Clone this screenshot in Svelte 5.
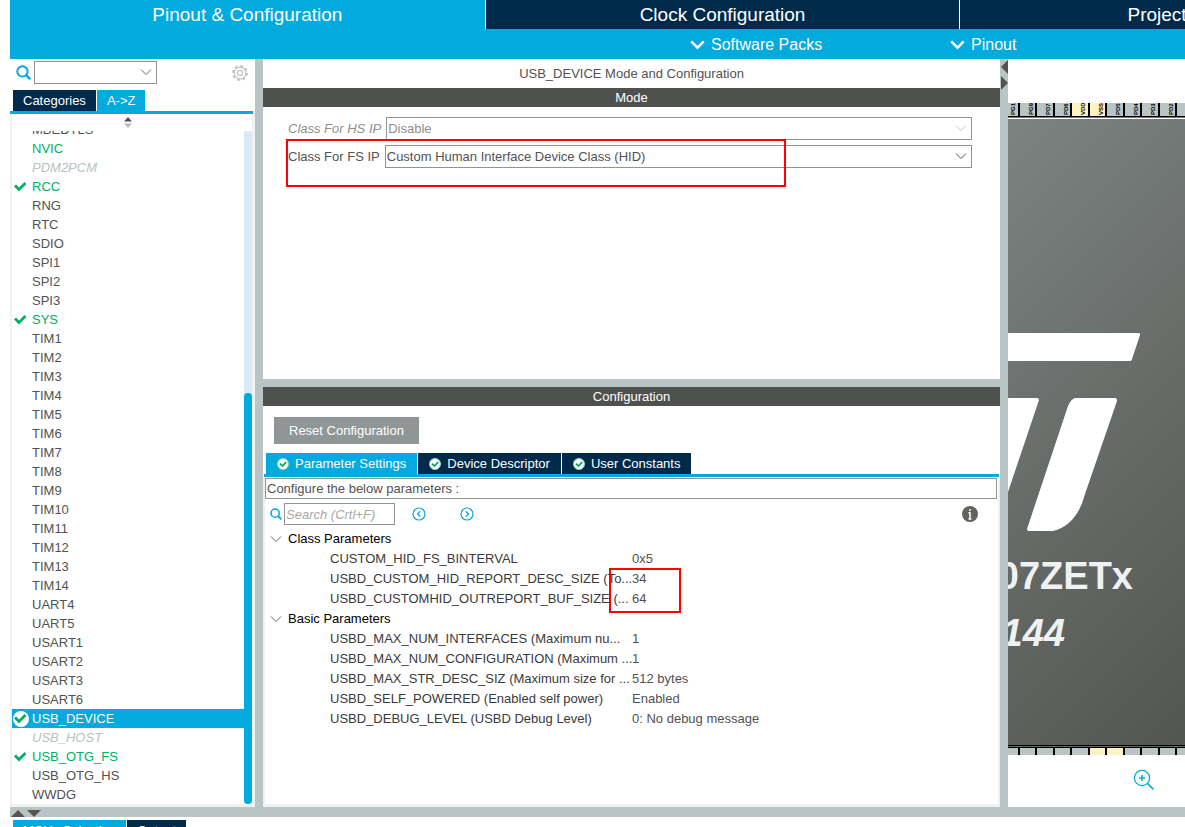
<script>
  /**
   * Pinout & Configuration screen: peripheral list, USB_DEVICE settings
   * and the chip view, with resizable-looking dividers between them.
   */

  const peripherals = [
    { name: 'MBEDTLS' },
    { name: 'NVIC', state: 'active' },
    { name: 'PDM2PCM', state: 'off' },
    { name: 'RCC', state: 'active', checked: true },
    { name: 'RNG' },
    { name: 'RTC' },
    { name: 'SDIO' },
    { name: 'SPI1' },
    { name: 'SPI2' },
    { name: 'SPI3' },
    { name: 'SYS', state: 'active', checked: true },
    ...Array.from({ length: 14 }, (_, i) => ({ name: `TIM${i + 1}` })),
    { name: 'UART4' },
    { name: 'UART5' },
    { name: 'USART1' },
    { name: 'USART2' },
    { name: 'USART3' },
    { name: 'USART6' },
    { name: 'USB_DEVICE', checked: true },
    { name: 'USB_HOST', state: 'off' },
    { name: 'USB_OTG_FS', state: 'active', checked: true },
    { name: 'USB_OTG_HS' },
    { name: 'WWDG' }
  ];

  const settingTabs = ['Parameter Settings', 'Device Descriptor', 'User Constants'];

  const groups = [
    {
      title: 'Class Parameters',
      rows: [
        ['CUSTOM_HID_FS_BINTERVAL', '0x5'],
        ['USBD_CUSTOM_HID_REPORT_DESC_SIZE (To...', '34'],
        ['USBD_CUSTOMHID_OUTREPORT_BUF_SIZE (...', '64']
      ]
    },
    {
      title: 'Basic Parameters',
      rows: [
        ['USBD_MAX_NUM_INTERFACES (Maximum nu...', '1'],
        ['USBD_MAX_NUM_CONFIGURATION (Maximum ...', '1'],
        ['USBD_MAX_STR_DESC_SIZ (Maximum size for ...', '512 bytes'],
        ['USBD_SELF_POWERED (Enabled self power)', 'Enabled'],
        ['USBD_DEBUG_LEVEL (USBD Debug Level)', '0: No debug message']
      ]
    }
  ];

  // Pin cells along the chip edges; x is the left side of each cell.
  const topPins = ['PG1', 'PG9', 'PD7', 'PD6', 'VDD', 'VSS', 'PD5', 'PD4', 'PD3', 'PD2', 'PD1'];
  const pinX = [-7, 11, 28, 46, 63, 81, 98, 116, 133, 151, 168];
  const topPower = [4, 5];
  const bottomPower = [5, 6];

  let selected = $state('USB_DEVICE');
  let activeTab = $state('Parameter Settings');
  let closed = $state({});

  function toggleGroup(title) {
    closed[title] = !closed[title];
  }
</script>

{#snippet chevron(size, color, weight)}
  <svg class="chevron" width={size} height={size} viewBox="0 0 12 12" aria-hidden="true">
    <path d="M1 3.5 6 8.5 11 3.5" fill="none" stroke={color} stroke-width={weight} />
  </svg>
{/snippet}

{#snippet lens(size)}
  <svg width={size} height={size} viewBox="0 0 14 14" aria-hidden="true">
    <circle cx="6" cy="6" r="4.8" fill="none" stroke="#02a9dc" stroke-width="1.8" />
    <path d="M9.5 9.5 13.3 13.3" stroke="#02a9dc" stroke-width="2.2" />
  </svg>
{/snippet}

<div class="app">
  <header>
    <nav class="main-tabs">
      <button class="current">Pinout &amp; Configuration</button>
      <button>Clock Configuration</button>
      <button>Project Manager</button>
    </nav>
    <div class="sub-bar">
      <button>{@render chevron(15, '#fff', 2)}Software Packs</button>
      <button>{@render chevron(15, '#fff', 2)}Pinout</button>
    </div>
  </header>

  <main>
    <aside>
      <div class="finder">
        {@render lens(15)}
        <div class="select">
          <select aria-label="Search peripheral"><option></option></select>
          {@render chevron(12, '#666', 1)}
        </div>
        <button class="gear" aria-label="Settings">
          <svg width="18" height="18" viewBox="0 0 18 18" fill="none" stroke="#c5c3bf">
            <circle cx="9" cy="9" r="2.6" stroke-width="1.3" />
            <circle cx="9" cy="9" r="5.8" stroke-width="1.2" />
            <circle cx="9" cy="9" r="7.1" stroke-width="1.8" stroke-dasharray="2.8 2.78" />
          </svg>
        </button>
      </div>
      <div class="tabs list-tabs">
        <button>Categories</button>
        <button class="current">A-&gt;Z</button>
      </div>
      <div class="list-frame">
        <button class="sort" aria-label="Sort">
          <svg width="8" height="11" viewBox="0 0 8 11">
            <path d="M4 0 8 4.5H0z" fill="#555" />
            <path d="M4 11 0 6.5H8z" fill="#bbb" />
          </svg>
        </button>
        <div class="list-scroll">
          <ul>
            {#each peripherals as item}
              <li class:selected={item.name === selected}>
                <button class={item.state ?? ''} onclick={() => (selected = item.name)}>
                  <span class="mark">
                    {#if item.checked}
                      <svg width="16" height="16" viewBox="0 0 16 16" aria-hidden="true">
                        {#if item.name === selected}
                          <circle cx="8" cy="8" r="8" fill="#fff" />
                        {/if}
                        <path d="M2 6.5 6 10.5 12.5 4" fill="none" stroke="#00b065" stroke-width="2.8" />
                      </svg>
                    {/if}
                  </span>
                  {item.name}
                </button>
              </li>
            {/each}
          </ul>
          <div class="track"><div class="thumb"></div></div>
        </div>
      </div>
    </aside>

    <div class="divider"></div>

    <div class="center">
      <section class="mode">
        <h1>USB_DEVICE Mode and Configuration</h1>
        <h2>Mode</h2>
        <div class="field disabled">
          <label for="hs">Class For HS IP</label>
          <div class="select">
            <select id="hs" disabled><option>Disable</option></select>
            {@render chevron(12, '#c8c8c8', 1)}
          </div>
        </div>
        <div class="field">
          <label for="fs">Class For FS IP</label>
          <div class="select">
            <select id="fs"><option>Custom Human Interface Device Class (HID)</option></select>
            {@render chevron(12, '#555', 1)}
          </div>
        </div>
        <div class="highlight mode-highlight"></div>
      </section>

      <div class="divider"></div>

      <section class="configuration">
        <h2>Configuration</h2>
        <button class="reset">Reset Configuration</button>
        <div class="tabs setting-tabs">
          {#each settingTabs as tab}
            <button class:current={tab === activeTab} onclick={() => (activeTab = tab)}>
              <svg width="12" height="12" viewBox="0 0 12 12" aria-hidden="true">
                <circle cx="6" cy="6" r="5.5" fill="#fff" stroke="#8fd9b9" />
                <path d="M3 5.6 5.4 8 9.2 4.2" fill="none" stroke="#00a65c" stroke-width="1.7" />
              </svg>
              {tab}
            </button>
          {/each}
        </div>
        <div class="settings">
          <p>Configure the below parameters :</p>
          <div class="param-search">
            {@render lens(12)}
            <input type="text" placeholder="Search (Crtl+F)" aria-label="Search parameters" />
            <button aria-label="Previous match">
              <svg width="14" height="14" viewBox="0 0 14 14" fill="none" stroke="#02a9dc">
                <circle cx="7" cy="7" r="6" stroke-width="1.2" />
                <path d="M8.2 4.4 5.6 7 8.2 9.6" stroke-width="1.3" />
              </svg>
            </button>
            <button aria-label="Next match">
              <svg width="14" height="14" viewBox="0 0 14 14" fill="none" stroke="#02a9dc">
                <circle cx="7" cy="7" r="6" stroke-width="1.2" />
                <path d="M5.8 4.4 8.4 7 5.8 9.6" stroke-width="1.3" />
              </svg>
            </button>
            <button class="info" aria-label="Information">
              <svg width="16" height="16" viewBox="0 0 16 16">
                <circle cx="8" cy="8" r="8" fill="#63625e" />
                <path d="M8 3v2M6.5 6.8H8V13.5M6.5 13H9.5" stroke="#fff" stroke-width="1.5" fill="none" />
              </svg>
            </button>
          </div>
          <div class="params">
            <table>
              <colgroup>
                <col class="name-col" />
                <col />
              </colgroup>
              {#each groups as group}
                <tbody>
                  <tr>
                    <th colspan="2">
                      <button onclick={() => toggleGroup(group.title)}>
                        {@render chevron(12, '#666', 1)}{group.title}
                      </button>
                    </th>
                  </tr>
                  {#if !closed[group.title]}
                    {#each group.rows as [name, value]}
                      <tr>
                        <td class="name">{name}</td>
                        <td>{value}</td>
                      </tr>
                    {/each}
                  {/if}
                </tbody>
              {/each}
            </table>
            <div class="highlight size-highlight"></div>
          </div>
        </div>
      </section>
    </div>

    <div class="divider">
      <svg width="8" height="32" viewBox="0 0 8 32" fill="#555450" aria-hidden="true">
        <path d="M8 1V15L1 8z" />
        <path d="M1 17V31L8 24z" />
      </svg>
    </div>

    <section class="chip-view">
      <svg class="chip" viewBox="0 0 177 652" preserveAspectRatio="xMinYMin meet">
        <defs>
          <linearGradient id="body" gradientUnits="userSpaceOnUse" x1="-195" y1="211" x2="207" y2="613">
            <stop offset="0" stop-color="#7c8381" />
            <stop offset="1" stop-color="#535551" />
          </linearGradient>
        </defs>
        <rect width="177" height="652" fill="#000" />
        {#each topPins as pin, i}
          <rect x={pinX[i] + 1} y="0" width="16" height="13" fill={topPower.includes(i) ? '#fff3c4' : '#b9c5c5'} />
          <text class="pin" transform="translate({pinX[i] + 14} 12) rotate(-90)">{pin}</text>
        {/each}
        {#each pinX as x, i}
          <rect x={x + 1} y="645" width="16" height="7" fill={bottomPower.includes(i) ? '#fff3c4' : '#b9c5c5'} />
        {/each}
        {#each pinX as x}
          <rect x={x - 1} y="0" width="2" height="13" />
          <rect x={x - 1} y="645" width="2" height="7" />
        {/each}
        <rect y="14" width="177" height="1" fill="#777" />
        <rect y="15" width="177" height="1" fill="#fff" />
        <rect y="16" width="177" height="626" fill="url(#body)" />
        <rect y="643" width="177" height="1" fill="#666" />
        <path
          fill="#fff"
          d="M0 230H131Q132 230 132 232L124 256Q124 258 122 258H0z
             M0 295H29Q31 295 31 297L0 389z
             M67 295H107Q109 295 109 298L77 391Q69 422 45 428H21Q19 428 19 426L25 408 60 303Q63 296 67 295z"
        />
        <text class="part" x="125" y="486">07ZETx</text>
        <text class="part package" x="57" y="543">144</text>
      </svg>
      <button class="zoom" aria-label="Zoom in">
        <svg width="22" height="22" viewBox="0 0 22 22" fill="none" stroke="#02a9dc">
          <circle cx="9" cy="9" r="7.6" stroke-width="1.3" />
          <path d="M9 6V12M6 9H12" stroke-width="1.5" />
          <path d="M14.5 14.5 20.5 20.5" stroke-width="1.7" />
        </svg>
      </button>
    </section>
  </main>

  <div class="divider bottom">
    <svg width="30" height="7" viewBox="0 0 30 7" fill="#555450" aria-hidden="true">
      <path d="M7 0 14 7H0z" />
      <path d="M16 0H30L23 7z" />
    </svg>
  </div>
  <footer class="tabs">
    <button class="current">MCUs Selection</button>
    <button>Output</button>
  </footer>
</div>

<style>
  :global(body) {
    margin: 0;
    background: #fff;
  }

  .app {
    display: flex;
    flex-direction: column;
    box-sizing: border-box;
    height: 100vh;
    padding-left: 10px;
    overflow: hidden;
    color: #525252;
    font: 13px/19px "Liberation Sans", Arial, sans-serif;
  }

  button,
  input,
  select {
    box-sizing: border-box;
    margin: 0;
    padding: 0;
    border: 0;
    border-radius: 0;
    background: none;
    color: inherit;
    font: inherit;
  }

  svg {
    display: block;
    flex: none;
  }

  /* header */
  header {
    flex: none;
    background: #02aadd;
    color: #fff;
  }

  .main-tabs {
    display: flex;
    height: 29px;
  }

  .main-tabs button {
    flex: 0 0 40.4%;
    background: #002a4a;
    border-left: 1px solid #fff;
    font-size: 19px;
  }

  .main-tabs .current {
    background: #02aadd;
    border-left: 0;
  }

  .sub-bar {
    display: flex;
    height: 30px;
    padding-left: 680px;
  }

  .sub-bar button {
    display: flex;
    flex: none;
    align-items: center;
    gap: 6px;
    width: 260px;
    font-size: 16px;
  }

  main {
    display: grid;
    grid-template-columns: 245px 8px minmax(0, 737fr) 8px minmax(0, 177fr);
    flex: 1;
    min-height: 0;
  }

  .divider {
    flex: none;
    min-height: 8px;
    background: #b9c5c5;
  }

  /* tabs */
  .tabs {
    display: flex;
    flex: none;
    gap: 1px;
    padding-left: 3px;
  }

  .tabs button {
    height: 21px;
    padding: 0 10px;
    background: #002a4a;
    color: #fff;
  }

  .tabs .current {
    background: #02aadd;
  }

  .select {
    position: relative;
    display: flex;
  }

  .select select {
    width: 100%;
    height: 23px;
    padding: 0 20px 0 1px;
    border: 1px solid #8e9694;
    background: #fff;
    appearance: none;
  }

  .select :global(.chevron) {
    position: absolute;
    top: 5px;
    right: 5px;
    pointer-events: none;
  }

  /* peripheral list */
  aside {
    display: flex;
    flex-direction: column;
    min-height: 0;
  }

  .finder {
    display: flex;
    align-items: center;
    gap: 3px;
    height: 27px;
    padding: 0 6px 4px 6px;
  }

  .finder .select {
    width: 123px;
  }

  .gear {
    margin-left: auto;
  }

  .list-tabs {
    margin-right: 2px;
    border-bottom: 3px solid #02aadd;
  }

  .list-frame {
    display: flex;
    flex: 1;
    flex-direction: column;
    min-height: 0;
    border: solid #f0f1f2;
    border-width: 0 3px 3px 2px;
  }

  .sort {
    height: 17px;
    margin-right: 8px;
    align-self: center;
  }

  .list-scroll {
    display: flex;
    flex: 1;
    min-height: 0;
  }

  ul {
    display: flex;
    flex: 1;
    flex-direction: column;
    justify-content: flex-end;
    margin: 0;
    padding: 0;
    overflow: hidden;
    list-style: none;
  }

  li {
    flex: none;
  }

  li button {
    display: flex;
    align-items: center;
    gap: 3px;
    width: 100%;
    height: 19px;
    padding-left: 1px;
    text-align: left;
  }

  .mark {
    width: 16px;
  }

  .active {
    color: #00b065;
  }

  .off {
    color: #b9c1c1;
    font-style: italic;
  }

  .selected {
    background: #02aadd;
    color: #fff;
  }

  .track {
    display: flex;
    flex-direction: column;
    justify-content: flex-end;
    width: 8px;
    background: #d7eaf6;
  }

  .thumb {
    height: 61%;
    border-radius: 4px;
    background: #02aadd;
  }

  /* centre column */
  .center {
    display: flex;
    flex-direction: column;
    min-height: 0;
  }

  h1,
  h2 {
    margin: 0;
    font-size: 13px;
    font-weight: normal;
    text-align: center;
  }

  h1 {
    line-height: 29px;
  }

  h2 {
    background: #4f514e;
    color: #fff;
    line-height: 19px;
  }

  .mode {
    position: relative;
    flex: 320 1 0;
    min-height: 0;
  }

  .field {
    display: flex;
    align-items: center;
    gap: 5px;
    margin-top: 5px;
    padding: 0 28px 0 25px;
  }

  .field.disabled {
    margin-top: 10px;
    color: #8e8e8e;
  }

  .field label {
    white-space: nowrap;
  }

  .disabled label {
    font-style: italic;
  }

  .field .select {
    flex: 1;
  }

  select:disabled {
    opacity: 1;
  }

  .highlight {
    position: absolute;
    box-sizing: border-box;
    border: 2px solid #f00;
    pointer-events: none;
  }

  .mode-highlight {
    top: 80px;
    left: 23px;
    width: 500px;
    height: 48px;
  }

  .configuration {
    display: flex;
    flex: 420 1 0;
    flex-direction: column;
    min-height: 0;
  }

  .reset {
    align-self: flex-start;
    height: 27px;
    margin: 11px 11px 9px;
    padding: 0 15px;
    background: #8f9796;
    color: #fff;
  }

  .setting-tabs {
    margin: 0 1px;
    padding-left: 2px;
    border-bottom: 3px solid #02aadd;
  }

  .setting-tabs button {
    display: flex;
    align-items: center;
    gap: 6px;
    padding: 0 11px;
  }

  .settings {
    flex: 1;
    min-height: 0;
    padding-top: 1px;
    border: solid #f0f1f2;
    border-width: 0 2px 3px;
  }

  .settings p {
    margin: 0 1px 0 0;
    padding-left: 1px;
    border: 1px solid #8e9694;
  }

  .param-search {
    display: flex;
    align-items: center;
    height: 22px;
    margin: 4px 0;
    padding: 0 20px 0 5px;
  }

  .param-search input {
    width: 111px;
    height: 22px;
    margin: 0 17px 0 2px;
    padding: 0 1px;
    border: 1px solid #8e9694;
  }

  .param-search input::placeholder {
    color: #aaa7a3;
    font-style: italic;
    opacity: 1;
  }

  .param-search button {
    margin-right: 34px;
  }

  .param-search .info {
    margin: 0 0 0 auto;
  }

  .params {
    position: relative;
  }

  table {
    width: 100%;
    border-collapse: collapse;
    table-layout: fixed;
  }

  .name-col {
    width: 366px;
  }

  th,
  td {
    height: 20px;
    padding: 0 0 0 1px;
    font-weight: normal;
    line-height: 20px;
    text-align: left;
    white-space: nowrap;
  }

  th button {
    display: flex;
    align-items: center;
    gap: 6px;
    height: 20px;
    padding-left: 4px;
    color: #000;
  }

  .name {
    padding-left: 65px;
    color: #3a3a3a;
  }

  .size-highlight {
    top: 39px;
    left: 344px;
    width: 72px;
    height: 45px;
  }

  /* chip */
  .chip-view {
    display: flex;
    flex-direction: column;
    min-height: 0;
    padding-top: 44px;
    overflow: hidden;
  }

  .chip {
    width: 100%;
    height: auto;
  }

  .pin {
    fill: #000;
    font: bold 6px "Liberation Sans Narrow", "Liberation Sans", sans-serif;
  }

  .part {
    fill: #f0f1f2;
    font: bold 38px "Liberation Sans", Arial, sans-serif;
    text-anchor: end;
  }

  .package {
    font-style: italic;
  }

  .zoom {
    align-self: flex-end;
    margin: 14px 30px 0 0;
  }

  /* bottom */
  .bottom {
    height: 10px;
    padding: 3px 0 0 1px;
    box-sizing: border-box;
  }

  footer.tabs {
    height: 7px;
    padding-top: 3px;
    overflow: hidden;
  }
</style>
